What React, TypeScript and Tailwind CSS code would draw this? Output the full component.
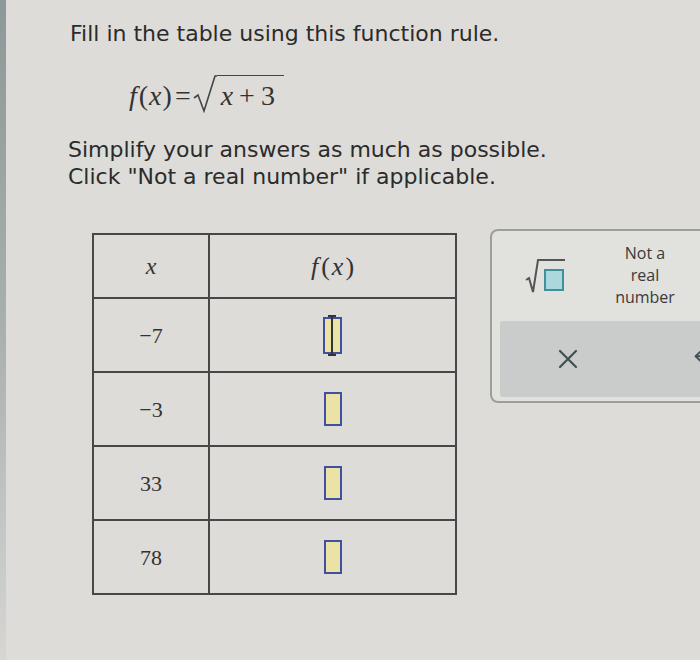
import React from "react";
import { Undo2 } from "lucide-react";

function AnswerBox({ focused }: { focused?: boolean }) {
  if (focused) {
    return (
      <div className="relative w-[19px] h-[37px] border-2 border-[#4050a0] bg-[#ebe3a6] mx-auto">
        <div className="absolute left-[6px] top-[-4px] bottom-[-4px] w-[2px] bg-[#333]" />
        <div className="absolute left-[3px] top-[-4px] w-[8px] h-[2px] bg-[#333]" />
        <div className="absolute left-[3px] bottom-[-4px] w-[8px] h-[2px] bg-[#333]" />
      </div>
    );
  }
  return <div className="w-[18px] h-[34px] border-2 border-[#4050a0] bg-[#ebe3a6] mx-auto" />;
}

function Row({ x, focused }: { x: string; focused?: boolean }) {
  return (
    <tr>
      <td className="border-2 border-[#474747] h-[74px] text-center font-['Liberation_Serif',serif] text-[22px] text-[#333]">
        {x}
      </td>
      <td className="border-2 border-[#474747] h-[74px] text-center">
        <AnswerBox focused={focused} />
      </td>
    </tr>
  );
}

export default function App() {
  return (
    <div className="w-[700px] h-[660px] overflow-hidden bg-[#dddcd9] flex text-[#2b2b2b]">
      <div className="w-[6px] shrink-0 bg-linear-to-b from-[#8d9898] via-[#a9b0af] to-[#d6d6d3]" />
      <div className="pl-[62px] pt-[20px] flex flex-col font-['DejaVu_Sans',sans-serif]">
        <div className="ml-[2px] text-[22px] leading-[27px]">Fill in the table using this function rule.</div>
        <div className="ml-[61px] mt-[28px] h-[40px] flex items-start font-['Liberation_Serif',serif] text-[28px] leading-[28px] text-[#333]">
          <div className="pt-[7px] flex">
            <span className="italic mr-[2px]">f</span>
            <span className="mr-[1px]">(</span>
            <span className="italic">x</span>
            <span className="ml-[1px]">)</span>
            <span className="ml-[3px] mr-[2px]">=</span>
          </div>
          <svg width="24" height="38" viewBox="0 0 24 38" className="shrink-0">
            <polyline points="1,23 5,20 11,36 22,1 24,1" fill="none" stroke="#444" strokeWidth="1.6" />
          </svg>
          <div className="border-t-[1.6px] border-[#444] pt-[6px] pl-[4px] pr-[9px] flex">
            <span className="italic">x</span>
            <span className="mx-[6px]">+</span>
            <span>3</span>
          </div>
        </div>
        <div className="mt-[21px] text-[22px] leading-[27px]">
          <div>Simplify your answers as much as possible.</div>
          <div>Click "Not a real number" if applicable.</div>
        </div>
        <div className="mt-[43px] flex items-start">
          <table className="ml-[24px] shrink-0 w-[363px] table-fixed border-collapse">
            <colgroup>
              <col className="w-[116px]" />
              <col className="w-[247px]" />
            </colgroup>
            <tbody>
              <tr>
                <td className="border-2 border-[#474747] h-[64px] text-center font-['Liberation_Serif',serif] italic text-[24px] text-[#333]">
                  x
                </td>
                <td className="border-2 border-[#474747] h-[64px] text-center font-['Liberation_Serif',serif] text-[26px] text-[#333]">
                  <span className="italic mr-[3px]">f</span>
                  <span className="mr-[2px]">(</span>
                  <span className="italic">x</span>
                  <span className="ml-[2px]">)</span>
                </td>
              </tr>
              <Row x="−7" focused />
              <Row x="−3" />
              <Row x="33" />
              <Row x="78" />
            </tbody>
          </table>
          <div className="ml-[33px] -mt-[4px] w-[290px] h-[174px] shrink-0 rounded-[8px] border-2 border-[#9c9e9d] bg-[#e1e1de] flex flex-col">
            <div className="flex h-[88px] shrink-0">
              <div className="ml-[8px] w-[90px] flex items-center justify-center">
                <svg width="42" height="37" viewBox="0 0 42 37">
                  <polyline points="2,23 5,21 9,35 14,3 41,3" fill="none" stroke="#555" strokeWidth="2" />
                  <rect x="21" y="13" width="18" height="20" fill="#acd7dd" stroke="#3f8f9c" strokeWidth="2" />
                </svg>
              </div>
              <div className="w-[110px] flex flex-col items-center justify-center font-['Open_Sans',sans-serif] text-[16px] leading-[22px] text-[#3a3a3a]">
                <span>Not a</span>
                <span>real</span>
                <span>number</span>
              </div>
            </div>
            <div className="mx-[8px] mt-[2px] mb-[4px] flex-1 bg-[#c9cccb] rounded-[3px] flex">
              <div className="flex-1 flex items-center justify-center">
                <svg width="20" height="20" viewBox="0 0 20 20">
                  <path d="M2 2 L18 18 M18 2 L2 18" stroke="#3f5052" strokeWidth="2.2" strokeLinecap="round" />
                </svg>
              </div>
              <div className="flex-1 flex items-center justify-center text-[#3f5052]">
                <Undo2 size={22} strokeWidth={2} />
              </div>
            </div>
          </div>
        </div>
      </div>
    </div>
  );
}
